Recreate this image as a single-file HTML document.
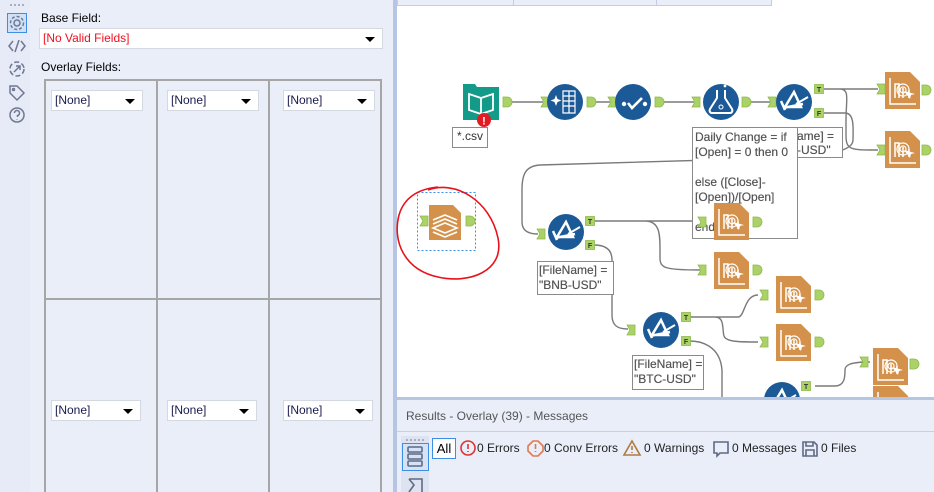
<!DOCTYPE html>
<html><head><meta charset="utf-8"><style>
*{margin:0;padding:0;box-sizing:border-box}
html,body{width:934px;height:492px;overflow:hidden;background:#eaeef9}
body{font-family:"Liberation Sans",Arial,sans-serif;font-size:12px;color:#000;position:relative}
.a{position:absolute}
.dd{position:absolute;background:#fff;border:1px solid #d4d8e0;height:21px;font-size:12px;line-height:19px;padding-left:3px;color:#1a1a50}
.dd:after{content:"";position:absolute;right:7px;top:8px;border-left:5px solid transparent;border-right:5px solid transparent;border-top:5px solid #000}
.lbl{position:absolute;background:#fff;border:1px solid #8a8a8a;color:#555;font-size:12px;line-height:15px;padding:2px 3px;white-space:nowrap;overflow:hidden;font-family:"Liberation Sans",sans-serif;text-shadow:0 0 0.4px #555}
</style></head><body>
<!-- left panel -->
<div class="a" style="left:0;top:0;width:393px;height:492px;background:#eaeef9"></div>
<div class="a" style="left:0;top:0;width:30px;height:492px;background:#e6ebf7"></div>
<div class="a" style="left:393px;top:0;width:4px;height:492px;background:#b6c5e2"></div>
<div class="a" style="left:397px;top:0;width:537px;height:398px;background:#fff"></div>
<div class="a" style="left:10px;top:4px;width:14px;height:2px;border-top:2px dotted #a8b0c0"></div>
<div class="a" style="left:7px;top:13px;width:20px;height:20px;border:1px solid #3d8fe6;background:#cfe0f7"></div>
<svg class="a" style="left:0;top:0" width="30" height="130" fill="none" stroke="#6f7890" stroke-width="1.5">
<circle cx="17" cy="23" r="3"/><circle cx="17" cy="23" r="6.5" stroke-dasharray="3 2"/>
<path d="M13 41l-4 5 4 5M21 41l4 5-4 5M19 40l-4 12"/>
<circle cx="17" cy="69" r="7" stroke-dasharray="5 2.5"/><path d="M14 72l6-6M16 66h4v4"/>
<path d="M10 86h7l7 7-7 7-7-7z"/><circle cx="13.5" cy="89.5" r="1"/>
<circle cx="17" cy="115" r="7"/><path d="M14.5 113a2.5 2.5 0 1 1 3 2.5v1.5M17 119v0.5"/>
</svg>
<div class="a" style="left:41px;top:11px;font-size:12px">Base Field:</div>
<div class="dd" style="left:39px;top:28px;width:344px;color:#f01020">[No Valid Fields]</div>
<div class="a" style="left:41px;top:60px;font-size:12px">Overlay Fields:</div>
<div class="a" style="left:44px;top:79px;width:338px;height:420px;border:2px solid #a6a6a6;border-bottom:none"></div>
<div class="a" style="left:156px;top:81px;width:2px;height:420px;background:#a6a6a6"></div>
<div class="a" style="left:268px;top:81px;width:2px;height:420px;background:#a6a6a6"></div>
<div class="a" style="left:46px;top:298px;width:334px;height:2px;background:#a6a6a6"></div>
<div class="dd" style="left:51px;top:90px;width:92px">[None]</div>
<div class="dd" style="left:167px;top:90px;width:92px">[None]</div>
<div class="dd" style="left:283px;top:90px;width:92px">[None]</div>
<div class="dd" style="left:51px;top:400px;width:90px">[None]</div>
<div class="dd" style="left:167px;top:400px;width:90px">[None]</div>
<div class="dd" style="left:283px;top:400px;width:90px">[None]</div>
<!-- tab strip -->
<div class="a" style="left:397px;top:0;width:375px;height:6px;background:#e9eef9;border:1px solid #c3cde3;border-top:none"></div>
<div class="a" style="left:513px;top:0;width:1px;height:5px;background:#c3cde3"></div>
<div class="a" style="left:656px;top:0;width:1px;height:5px;background:#c3cde3"></div>
<!-- canvas -->
<svg class="a" style="left:0;top:0" width="934" height="398">
<defs>
<g id="in"><path d="M-4-5h8v10h-8l3-5z" fill="#abd267" stroke="#8fba4e" stroke-width="0.8"/></g>
<g id="out"><path d="M-4-5h4a5 5 0 0 1 0 10h-4z" fill="#abd267" stroke="#8fba4e" stroke-width="0.8"/></g>
<g id="flt"><circle r="18" fill="#1b5a97"/><path d="M-11 6l20-4M0-10l-9 15h16z M-13 -1l4 9" fill="none" stroke="#fff" stroke-width="2.5"/><path d="M2 2l12-7" stroke="#fff" stroke-width="2"/></g>
<g id="br"><path d="M0 0h25l10 10v27h-35z" fill="#d4914b"/><path d="M5 6v26h26M10 26v-14h4v14M18 26v-10M24 26v-8" fill="none" stroke="#fff" stroke-width="1.5"/><circle cx="18" cy="18" r="6" fill="none" stroke="#fff" stroke-width="1.2"/><circle cx="18" cy="18" r="3" fill="none" stroke="#fff" stroke-width="1.2"/><path d="M19 19l6 8 1-4 4-1z" fill="#fff"/></g>
<g id="T"><rect x="-4.5" y="-4.5" width="9" height="9" fill="#abd267" stroke="#8fba4e" stroke-width="0.8"/><text x="0" y="3" font-size="7" font-weight="bold" text-anchor="middle" font-family="Liberation Sans" fill="#333">T</text></g>
<g id="F"><rect x="-4.5" y="-4.5" width="9" height="9" fill="#abd267" stroke="#8fba4e" stroke-width="0.8"/><text x="0" y="3" font-size="7" font-weight="bold" text-anchor="middle" font-family="Liberation Sans" fill="#333">F</text></g>
</defs>
<g fill="none" stroke="#7a7a7a" stroke-width="1.4">
<path d="M511 102H543M595 102H610M663 102H694M750 102H770"/>
<path d="M824 89H878M840 89C850 89 846 100 846 120V135C846 150 850 150 878 150"/>
<path d="M824 113H845C855 113 853 130 853 140C853 150 835 155 780 158L540 165C525 166 522 175 522 190V222C522 232 530 234 538 234"/>
<path d="M594 221H700M645 221C660 221 660 235 660 250V258C660 268 665 270 700 270"/>
<path d="M594 245C606 245 612 250 612 260V315C612 326 618 329 628 329"/>
<path d="M690 317H738C745 317 744 295 758 295M715 317C725 317 722 330 724 336C726 342 740 342 758 342"/>
<path d="M690 341C700 341 720 345 722 370V398"/>
<path d="M815 386H835C845 386 845 376 845 370C845 365 850 362 870 362"/>
</g>
<path d="M463 84h12l2 3h22v33h-36z" fill="#139a89"/>
<path d="M469 94l12 4 12-4v16l-12 4-12-4z M481 98v16" fill="none" stroke="#fff" stroke-width="1.8"/>
<circle cx="484" cy="120" r="7" fill="#e21b23"/><text x="484" y="124.5" font-size="11" font-weight="bold" fill="#fff" text-anchor="middle" font-family="Liberation Sans">!</text>
<use href="#out" x="507" y="102"/>
<use href="#in" x="545" y="102"/>
<circle cx="565" cy="102" r="18" fill="#1b5a97"/>
<path d="M563 91h12v22h-12zM563 96h12M563 101h12M563 106h12M569 91v22" stroke="#fff" fill="none" stroke-width="1.2"/>
<path d="M556 95l1.5 4 4 1.5-4 1.5-1.5 4-1.5-4-4-1.5 4-1.5z" fill="#fff"/>
<use href="#out" x="591" y="102"/>
<use href="#in" x="612" y="102"/>
<circle cx="633" cy="102" r="18" fill="#1b5a97"/>
<circle cx="624" cy="104" r="2.2" fill="#fff"/><path d="M628 103l4 5 10-10" stroke="#fff" stroke-width="2.6" fill="none"/><circle cx="645" cy="104" r="2.2" fill="#fff"/>
<use href="#out" x="659" y="102"/>
<use href="#in" x="696" y="102"/>
<circle cx="721" cy="102" r="18" fill="#1b5a97"/>
<path d="M717 90v8l-7 11c-1 2 0 4 2 4h18c2 0 3-2 2-4l-7-11v-8" fill="none" stroke="#fff" stroke-width="2"/><circle cx="721" cy="107" r="2" fill="none" stroke="#fff"/><circle cx="725" cy="86" r="1.4" fill="#fff"/>
<use href="#out" x="746" y="102"/>
<use href="#in" x="772" y="102"/>
<use href="#flt" x="794" y="102"/>
<use href="#T" x="819" y="89"/><use href="#F" x="819" y="113"/>
<use href="#in" x="881" y="89"/><use href="#br" x="885" y="72"/><use href="#out" x="926" y="90"/>
<use href="#in" x="881" y="150"/><use href="#br" x="885" y="131"/><use href="#out" x="926" y="150"/>
</svg>
<div class="lbl" style="left:452px;top:127px;width:36px;height:21px;padding:1px 4px;color:#333;text-shadow:none">*.csv</div>
<div class="lbl" style="left:700px;top:127px;width:143px;height:31px"><span class="a" style="left:96px;top:1px">ame] =</span><span class="a" style="left:96px;top:15px">-USD"</span></div>
<div class="lbl" style="left:692px;top:127px;width:106px;height:112px;padding:2px 2px">Daily Change = if<br>[Open] = 0 then 0<br><br>else ([Close]-<br>[Open])/[Open]<br><br>endif</div>
<div class="lbl" style="left:537px;top:261px;width:77px;height:34px;padding:1px 1px">[FileName] =<br>"BNB-USD"</div>
<div class="lbl" style="left:632px;top:355px;width:72px;height:35px;padding:1px 1px">[FileName] =<br>"BTC-USD"</div>
<svg class="a" style="left:0;top:0" width="934" height="398">
<defs>
<g id="in2"><path d="M-4-5h8v10h-8l3-5z" fill="#abd267" stroke="#8fba4e" stroke-width="0.8"/></g>
<g id="out2"><path d="M-4-5h4a5 5 0 0 1 0 10h-4z" fill="#abd267" stroke="#8fba4e" stroke-width="0.8"/></g>
<g id="br2"><path d="M0 0h25l10 10v27h-35z" fill="#d4914b"/><path d="M5 6v26h26M10 26v-14h4v14M18 26v-10M24 26v-8" fill="none" stroke="#fff" stroke-width="1.5"/><circle cx="18" cy="18" r="6" fill="none" stroke="#fff" stroke-width="1.2"/><circle cx="18" cy="18" r="3" fill="none" stroke="#fff" stroke-width="1.2"/><path d="M19 19l6 8 1-4 4-1z" fill="#fff"/></g>
<g id="flt2"><circle r="18" fill="#1b5a97"/><path d="M-11 6l20-4M0-10l-9 15h16z M-13 -1l4 9" fill="none" stroke="#fff" stroke-width="2.5"/><path d="M2 2l12-7" stroke="#fff" stroke-width="2"/></g>
<g id="T2"><rect x="-4.5" y="-4.5" width="9" height="9" fill="#abd267" stroke="#8fba4e" stroke-width="0.8"/><text x="0" y="3" font-size="7" font-weight="bold" text-anchor="middle" font-family="Liberation Sans" fill="#333">T</text></g>
<g id="F2"><rect x="-4.5" y="-4.5" width="9" height="9" fill="#abd267" stroke="#8fba4e" stroke-width="0.8"/><text x="0" y="3" font-size="7" font-weight="bold" text-anchor="middle" font-family="Liberation Sans" fill="#333">F</text></g>
</defs>
<use href="#in2" x="541" y="234"/><use href="#flt2" x="566" y="232"/>
<use href="#T2" x="590" y="221"/><use href="#F2" x="590" y="245"/>
<use href="#in2" x="702" y="222"/><use href="#br2" x="714" y="203"/><use href="#out2" x="757" y="222"/>
<use href="#in2" x="702" y="270"/><use href="#br2" x="714" y="252"/><use href="#out2" x="757" y="270"/>
<use href="#in2" x="631" y="330"/><use href="#flt2" x="661" y="330"/>
<use href="#T2" x="686" y="317"/><use href="#F2" x="686" y="341"/>
<use href="#in2" x="764" y="295"/><use href="#br2" x="776" y="276"/><use href="#out2" x="819" y="295"/>
<use href="#in2" x="764" y="342"/><use href="#br2" x="776" y="324"/><use href="#out2" x="819" y="342"/>
<use href="#in2" x="864" y="362"/><use href="#br2" x="873" y="348"/><use href="#out2" x="914" y="364"/>
<use href="#br2" x="873" y="386"/>
<use href="#flt2" x="782" y="400"/><use href="#T2" x="806" y="386"/>
<rect x="417.5" y="192.5" width="58" height="58" fill="none" stroke="#3d8fe6" stroke-dasharray="2 2"/>
<use href="#in2" x="424" y="221"/><use href="#out2" x="470" y="221"/>
<path d="M429 205h24l8 8v27h-32z" fill="#d4914b"/>
<path d="M433 228l12-5 12 5-12 5zM433 224l12-5 12 5M433 220l12-5 12 5M433 232l12 5 12-5" fill="none" stroke="#fff" stroke-width="1.6"/>
<path d="M428 190C455 180 490 200 498 238C505 272 468 284 438 277C405 270 392 242 399 215C404 198 418 189 438 187" fill="none" stroke="#e8121a" stroke-width="1.6"/>
</svg>
<!-- results panel -->
<div class="a" style="left:397px;top:397px;width:537px;height:95px;background:#e9eef9;border-top:3px solid #b6c5e2"></div>
<div class="a" style="left:397px;top:400px;width:537px;height:32px;border-bottom:1px solid #c8d0e0"></div>
<div class="a" style="left:406px;top:409px;color:#555;font-size:12px">Results - Overlay (39) - Messages</div>
<div class="a" style="left:401px;top:436px;width:28px;height:56px;background:#dde3f0"></div>
<div class="a" style="left:406px;top:439px;width:18px;border-top:2px dotted #a8b0c0"></div>
<div class="a" style="left:402px;top:443px;width:27px;height:28px;border:1px solid #3d8fe6;background:#d6e3f7"></div>
<svg class="a" style="left:396px;top:430px" width="538" height="62" fill="none" stroke-width="1.6">
<rect x="12" y="17" width="14" height="5" rx="1" stroke="#5f6b85"/><rect x="12" y="24" width="14" height="5" rx="1" stroke="#5f6b85"/><rect x="12" y="31" width="14" height="5" rx="1" stroke="#5f6b85"/>
<path d="M13 49h13v13M13 49l5 6-5 7" stroke="#5f6b85"/>
<circle cx="72" cy="18" r="7" stroke="#d33"/><path d="M72 14v5M72 21v1" stroke="#d33"/>
<path d="M137 11h5l5 5v5l-5 5h-5l-5-5v-5z" stroke="#e07850"/><path d="M139.5 14v5M139.5 21v1" stroke="#e07850"/>
<path d="M236 11l8 14h-16z" stroke="#b07a40"/><path d="M236 16v4M236 22v1" stroke="#b07a40"/>
<path d="M318 12h14v11h-8l-3 3v-3h-3z" stroke="#5f6b85"/>
<path d="M407 12h11l3 3v11h-14z M410 12v4h7v-4M410 26v-6h8v6" stroke="#5f6b85"/>
</svg>
<div class="a" style="left:432px;top:438px;width:24px;height:21px;border:1px solid #3d8fe6;background:#fff;font-size:13px;line-height:19px;text-align:center">All</div>
<div class="a" style="left:477px;top:441px;font-size:12px;color:#222">0 Errors</div>
<div class="a" style="left:544px;top:441px;font-size:12px;color:#222">0 Conv Errors</div>
<div class="a" style="left:644px;top:441px;font-size:12px;color:#222">0 Warnings</div>
<div class="a" style="left:732px;top:441px;font-size:12px;color:#222">0 Messages</div>
<div class="a" style="left:821px;top:441px;font-size:12px;color:#222">0 Files</div>
</body></html>
